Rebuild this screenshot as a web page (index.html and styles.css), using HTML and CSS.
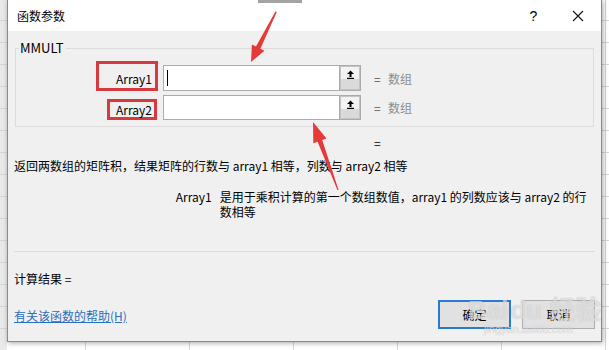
FILE: index.html
```html
<!DOCTYPE html>
<html lang="zh-CN">
<head>
  <meta charset="UTF-8">
  <title>函数参数</title>
  <link rel="stylesheet" href="styles.css">
</head>
<body>
  <div class="dialog">
    <div class="title-bar">
      <div class="title">函数参数</div>
      <div class="title-buttons">
        <span class="help-btn">?</span>
        <span class="close-btn">
          <svg width="12" height="12" viewBox="0 0 12 12"><path d="M1 1L11 11M11 1L1 11" stroke="#111" stroke-width="1.1" fill="none"/></svg>
        </span>
      </div>
    </div>

    <div class="dialog-body">
      <fieldset class="func-box">
        <legend>MMULT</legend>

        <div class="arg-row">
          <div class="arg-label"><span class="mark mark-1">Array1</span></div>
          <div class="arg-field">
            <div class="ref-input">
              <div class="ref-text"><span class="caret"></span></div>
              <div class="ref-btn">
                <svg width="9" height="9" viewBox="0 0 9 9"><path d="M4.5 0.5L8 4H5.5V7H3.5V4H1Z" fill="#000"/><rect x="1" y="7.8" width="7" height="1.2" fill="#000"/></svg>
              </div>
            </div>
            <span class="eq">=</span>
            <span class="eq-value">数组</span>
          </div>
        </div>

        <div class="arg-row">
          <div class="arg-label"><span class="mark mark-2">Array2</span></div>
          <div class="arg-field">
            <div class="ref-input">
              <div class="ref-text"></div>
              <div class="ref-btn">
                <svg width="9" height="9" viewBox="0 0 9 9"><path d="M4.5 0.5L8 4H5.5V7H3.5V4H1Z" fill="#000"/><rect x="1" y="7.8" width="7" height="1.2" fill="#000"/></svg>
              </div>
            </div>
            <span class="eq">=</span>
            <span class="eq-value">数组</span>
          </div>
        </div>
      </fieldset>

      <div class="result-eq">=</div>

      <div class="func-desc">返回两数组的矩阵积，结果矩阵的行数与 array1 相等，列数与 array2 相等</div>

      <div class="arg-desc">
        <div class="arg-desc-name">Array1</div>
        <div class="arg-desc-text">是用于乘积计算的第一个数组数值，array1 的列数应该与 array2 的行数相等</div>
      </div>

      <div class="separator"></div>

      <div class="calc-result">计算结果 =</div>

      <div class="footer">
        <a class="help-link" href="#">有关该函数的帮助(H)</a>
        <div class="footer-buttons">
          <button class="btn btn-default">确定</button>
          <button class="btn">取消</button>
        </div>
      </div>
    </div>
  </div>

  <!-- 标注箭头 -->
  <svg class="annotations" width="609" height="350" viewBox="0 0 609 350">
    <rect x="258" y="0" width="44" height="3" fill="#666" opacity="0.6"/>
    <polygon points="276.8,12 260.4,48.8 264.5,50.8 251,62 251.9,44.6 256,46.6 275.4,11.4" fill="#e63a3a"/>
    <polygon points="338.6,190 322.2,140 326.5,138.4 313,122 313.3,143.2 317.6,141.7 337.4,190" fill="#e63a3a"/>
  </svg>

  <div class="watermark">
    <div class="wm-big">Bai<span class="wm-du">du</span> 经验</div>
    <div class="wm-small">jingyan.baidu.com</div>
  </div>
</body>
</html>
```

FILE: styles.css
```css
* {
  margin: 0;
  padding: 0;
  box-sizing: border-box;
}

body {
  width: 609px;
  height: 350px;
  overflow: hidden;
  position: relative;
  font-family: "Noto Sans CJK SC", "Noto Sans", sans-serif;
  font-size: 12px;
  color: #000;
  background-color: #fff;
  background-image:
    linear-gradient(to right, #d6d6d6 0 1px, transparent 1px),
    linear-gradient(to bottom, #d6d6d6 0 1px, transparent 1px),
    linear-gradient(to right, #e9e9e9 0 7px, transparent 7px);
  background-size: 104px 100%, 100% 22px, 100% 100%;
  background-position: 85px 0, 0 20px, 0 0;
}

.dialog {
  width: 595px;
  height: 342px;
  margin-left: 7px;
  background: #f0f0f0;
  border: 1px solid #8a8a8a;
  border-top: none;
  box-shadow: 1px 1px 5px rgba(0, 0, 0, 0.35);
  display: flex;
  flex-direction: column;
}

.title-bar {
  height: 31px;
  background: #fff;
  display: flex;
  align-items: center;
  justify-content: space-between;
  padding-left: 9px;
}

.title {
  font-size: 12px;
  line-height: 16px;
}

.title-buttons {
  display: flex;
  align-items: center;
  height: 100%;
}

.help-btn {
  width: 46px;
  text-align: center;
  font-size: 14px;
  font-family: "Liberation Sans", sans-serif;
  padding-left: 3px;
}

.close-btn {
  width: 46px;
  display: flex;
  justify-content: center;
  align-items: center;
}

.dialog-body {
  flex: 1;
  padding: 0 6px 9px 6px;
  display: flex;
  flex-direction: column;
}

.func-box {
  margin: 9px 1px 0 1px;
  border: 1px solid #dcdcdc;
  padding: 5px 0 6px 0;
  display: flex;
  flex-direction: column;
  gap: 4px;
}

.func-box legend {
  font-size: 13px;
  line-height: 16px;
  margin-left: 3px;
  padding: 0 2px 0 1px;
}

.arg-row {
  display: flex;
  align-items: flex-end;
}

.arg-label {
  width: 142px;
  display: flex;
  justify-content: flex-end;
}

.mark {
  display: block;
  border: 3px solid #d63a3e;
  text-align: right;
  font-size: 12px;
}

.mark-1 {
  width: 62px;
  height: 30px;
  line-height: 26px;
  padding-right: 3px;
  padding-top: 2px;
}

.mark-2 {
  width: 50px;
  height: 21px;
  line-height: 15px;
  padding-right: 2px;
  margin-right: 1px;
}

.arg-field {
  display: flex;
  align-items: center;
  margin-left: 5px;
}

.ref-input {
  width: 198px;
  height: 26px;
  display: flex;
  border: 1px solid #ababab;
  background: #fff;
}

.arg-row + .arg-row .ref-input {
  height: 25px;
}

.ref-text {
  flex: 1;
  display: flex;
  align-items: center;
  padding-left: 3px;
}

.caret {
  width: 1px;
  height: 16px;
  background: #000;
}

.ref-btn {
  width: 21px;
  border-left: 1px solid #ababab;
  background: linear-gradient(to bottom, #f3f3f3 0 55%, #dadada 55%);
  box-shadow: inset 0 0 0 1px #c4c4c4;
  display: flex;
  justify-content: center;
  padding-top: 4px;
}

.eq {
  margin-left: 13px;
  color: #555;
  width: 7px;
}

.eq-value {
  margin-left: 7px;
  color: #8c8c8c;
}

.result-eq {
  margin-top: 8px;
  padding-left: 360px;
  line-height: 16px;
}

.func-desc {
  margin-top: 7px;
  line-height: 16px;
}

.arg-desc {
  margin-top: 15px;
  display: flex;
  gap: 8px;
  line-height: 15px;
}

.arg-desc-name {
  width: 198px;
  text-align: right;
}

.arg-desc-text {
  width: 376px;
}

.separator {
  margin-top: 32px;
  height: 1px;
  background: #dcdcdc;
}

.calc-result {
  margin-top: 19px;
  line-height: 16px;
}

.footer {
  margin-top: 13px;
  display: flex;
  justify-content: space-between;
  align-items: center;
}

.help-link {
  color: #2a6ebd;
  text-decoration: underline;
  font-size: 12px;
  line-height: 16px;
  padding-top: 3px;
}

.footer-buttons {
  display: flex;
  gap: 11px;
}

.btn {
  width: 73px;
  height: 29px;
  font-family: inherit;
  font-size: 12px;
  background: #e1e1e1;
  border: 1px solid #adadad;
  color: #000;
}

.btn-default {
  border: 2px solid #2a7ad2;
}

.annotations {
  position: absolute;
  top: 0;
  left: 0;
  pointer-events: none;
}

.watermark {
  position: absolute;
  left: 468px;
  top: 296px;
  color: rgba(255, 255, 255, 0.55);
  text-shadow: 0 0 1px rgba(120, 120, 120, 0.45);
  pointer-events: none;
}

.wm-big {
  font-family: "Liberation Sans", "Noto Sans CJK SC", sans-serif;
  font-size: 26px;
  font-weight: bold;
  line-height: 28px;
}

.wm-du {
  margin-left: 2px;
}

.wm-small {
  font-family: "Liberation Sans", sans-serif;
  font-size: 11px;
  line-height: 11px;
  padding-left: 16px;
}
```
